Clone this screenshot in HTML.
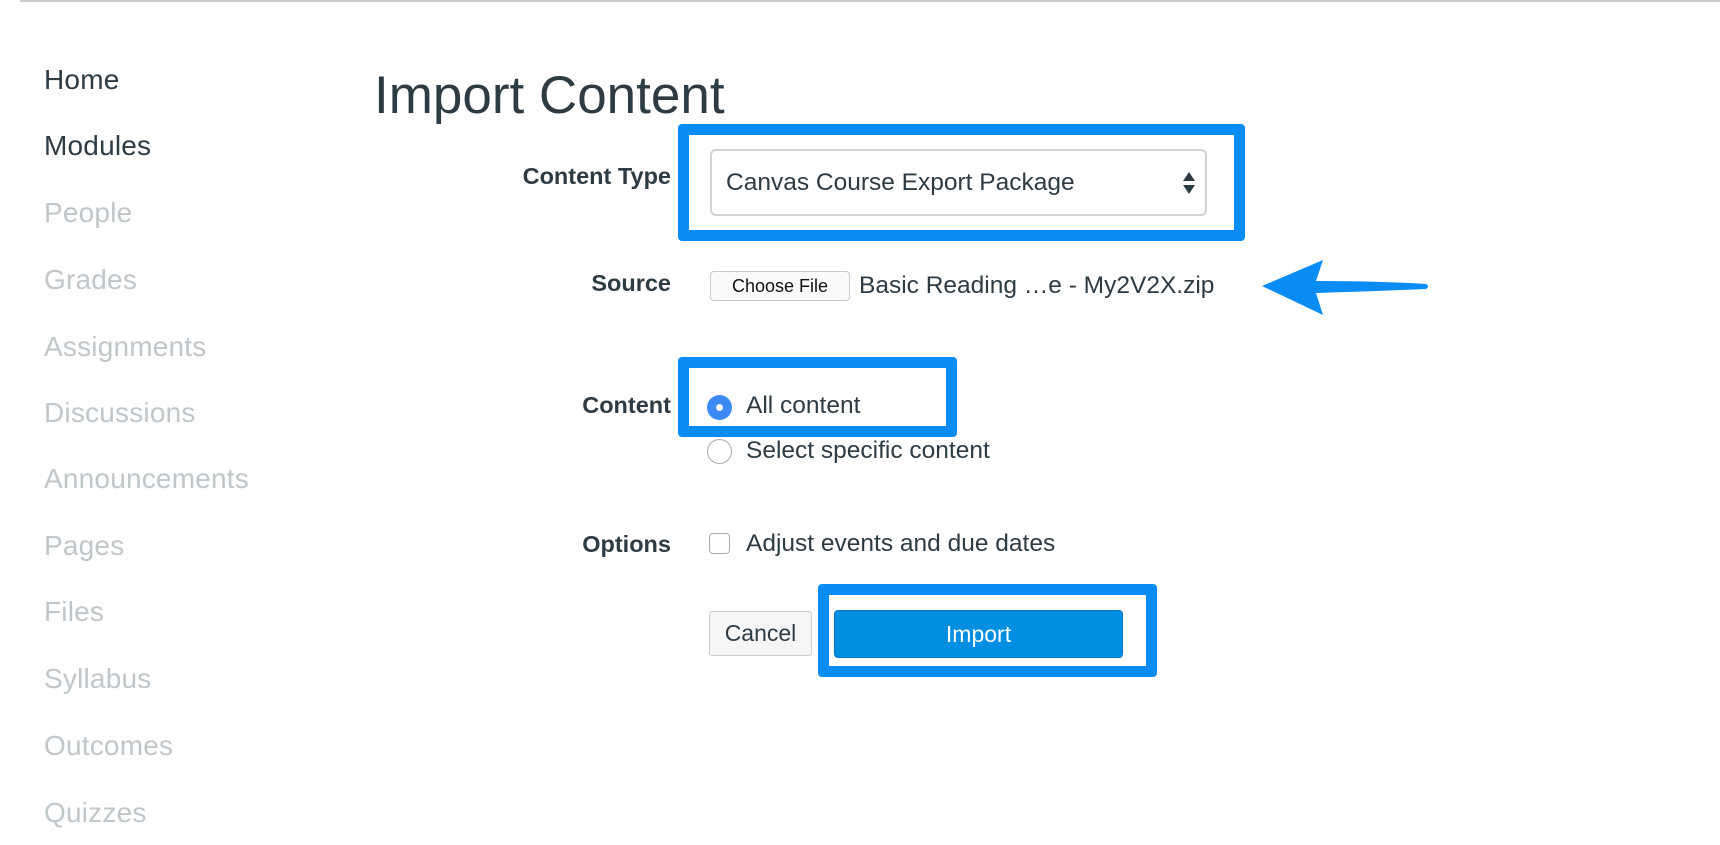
<!DOCTYPE html>
<html><head><style>
body{margin:0;width:1720px;height:845px;background:#fff;position:relative;overflow:hidden;font-family:"Liberation Sans",sans-serif;color:#2d3b45}
.a{position:absolute;white-space:nowrap}
.nav{left:44px;font-size:28px;line-height:30px;color:#c0c6ca;letter-spacing:0.2px}
.lbl{font-size:23.5px;font-weight:bold;text-align:right;right:1049px;line-height:26px}
.box{position:absolute;border:11px solid #0a8cf5;border-radius:4px;box-sizing:border-box}
.t{font-size:24.5px;line-height:28px}
</style></head><body>
<div class="a" style="left:20px;top:0;width:1700px;height:2px;background:#c7cdd1"></div>
<div class="a nav" style="top:65px;color:#2d3b45">Home</div>
<div class="a nav" style="top:131px;color:#2d3b45">Modules</div>
<div class="a nav" style="top:198px">People</div>
<div class="a nav" style="top:265px">Grades</div>
<div class="a nav" style="top:332px">Assignments</div>
<div class="a nav" style="top:398px">Discussions</div>
<div class="a nav" style="top:464px">Announcements</div>
<div class="a nav" style="top:531px">Pages</div>
<div class="a nav" style="top:597px">Files</div>
<div class="a nav" style="top:664px">Syllabus</div>
<div class="a nav" style="top:731px">Outcomes</div>
<div class="a nav" style="top:798px">Quizzes</div>
<div class="a" style="left:374px;top:66px;font-size:53px;line-height:60px">Import Content</div>

<div class="a lbl" style="top:163px">Content Type</div>
<div class="box" style="left:678px;top:124px;width:567px;height:117px"></div>
<div class="a" style="left:710px;top:149px;width:497px;height:67px;border:2px solid #d0d4d7;border-radius:6px;box-sizing:border-box"></div>
<div class="a t" style="left:726px;top:169px">Canvas Course Export Package</div>
<svg class="a" style="left:1182px;top:170px" width="14" height="26"><path d="M7 2L13 11H1Z M7 24L13 15H1Z" fill="#2d3b45"/></svg>

<div class="a lbl" style="top:270px">Source</div>
<div class="a" style="left:710px;top:271px;width:140px;height:30px;border:1px solid #c8c8c8;border-radius:4px;background:#fafafa;box-sizing:border-box;font-size:18px;line-height:28px;text-align:center;color:#111">Choose File</div>
<div class="a t" style="left:859px;top:272px">Basic Reading …e - My2V2X.zip</div>
<svg class="a" style="left:1258px;top:255px" width="175" height="66"><path d="M4 31L65 5L58 26Q120 26 168 29Q172 31 168 34Q120 36 58 38L65 60Z" fill="#0a8cf5"/></svg>

<div class="a lbl" style="top:392px">Content</div>
<div class="box" style="left:678px;top:357px;width:279px;height:80px"></div>
<div class="a" style="left:707px;top:395px;width:25px;height:25px;border-radius:50%;background:#3d8af7"></div>
<div class="a" style="left:716px;top:404px;width:7px;height:7px;border-radius:50%;background:#fff"></div>
<div class="a t" style="left:746px;top:392px">All content</div>
<div class="a" style="left:707px;top:439px;width:25px;height:25px;border-radius:50%;border:1px solid #aaa;box-sizing:border-box"></div>
<div class="a t" style="left:746px;top:437px">Select specific content</div>

<div class="a lbl" style="top:531px">Options</div>
<div class="a" style="left:709px;top:533px;width:21px;height:21px;border-radius:4px;border:1px solid #aaa;box-sizing:border-box"></div>
<div class="a t" style="left:746px;top:530px">Adjust events and due dates</div>

<div class="a" style="left:709px;top:611px;width:103px;height:45px;border:1px solid #c7cdd1;border-radius:3px;background:#f5f5f5;box-sizing:border-box;font-size:23px;line-height:43px;text-align:center">Cancel</div>
<div class="box" style="left:818px;top:584px;width:339px;height:93px"></div>
<div class="a" style="left:834px;top:610px;width:289px;height:48px;border:1px solid #0774bd;border-radius:4px;background:#008ee2;box-sizing:border-box;font-size:23px;line-height:46px;text-align:center;color:#fff">Import</div>
</body></html>
